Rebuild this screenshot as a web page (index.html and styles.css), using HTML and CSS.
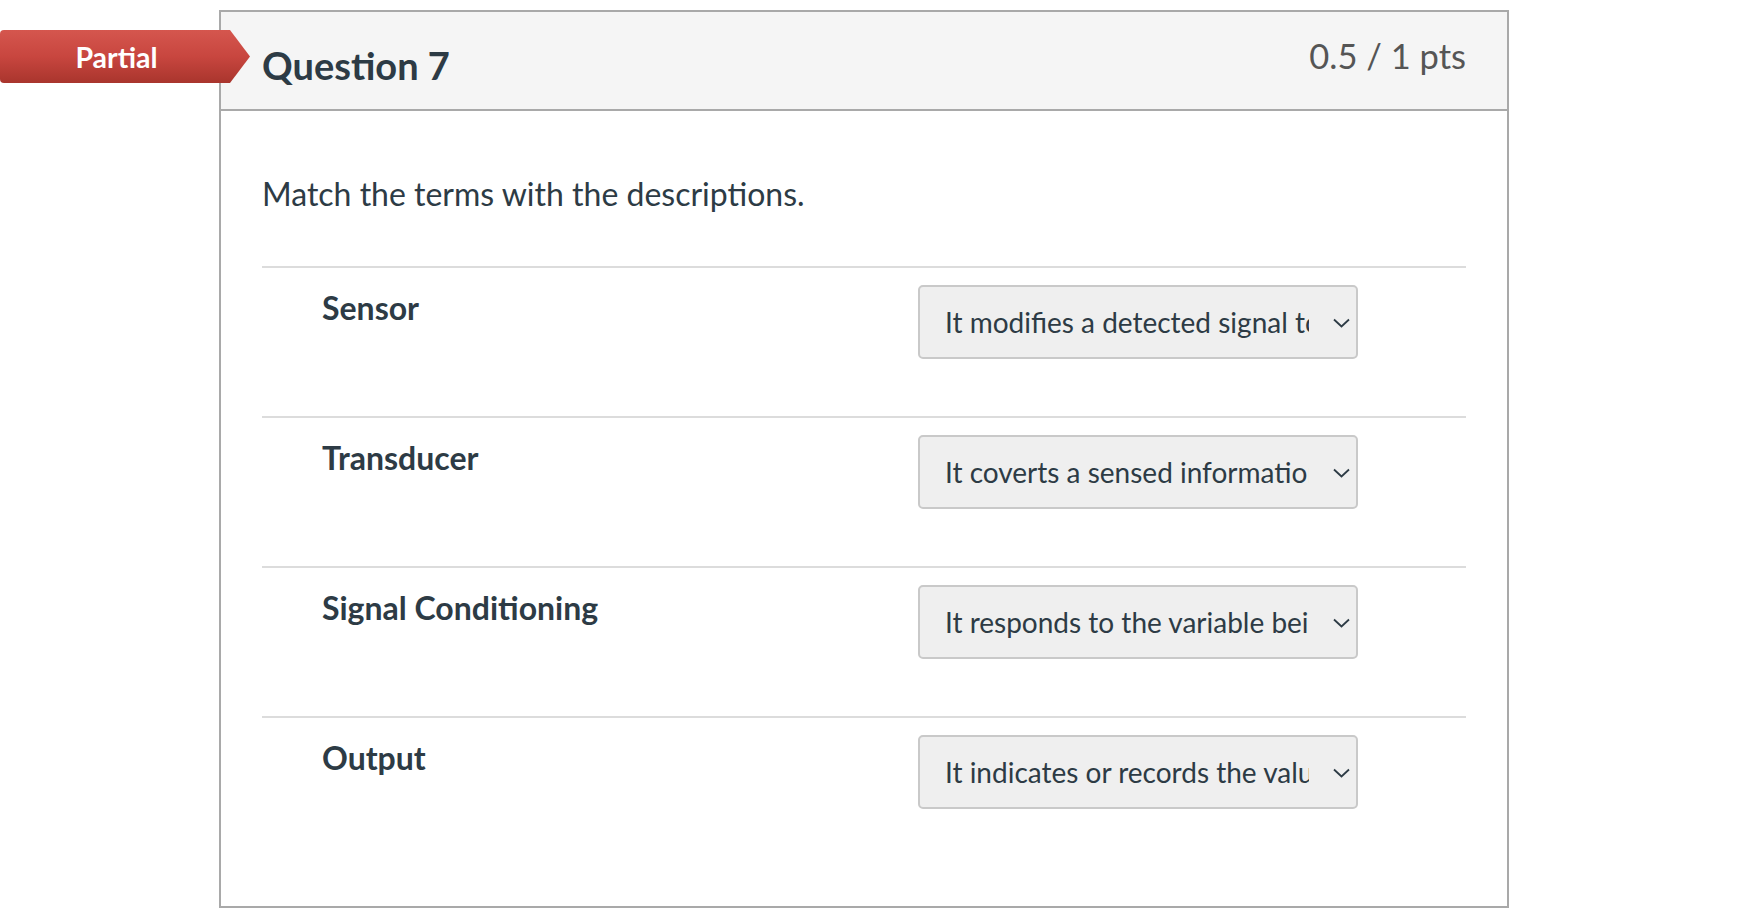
FILE: index.html
```html
<!DOCTYPE html>
<html lang="en">
<head>
<meta charset="utf-8">
<title>Question 7</title>
<link rel="stylesheet" href="styles.css">
</head>
<body>
<div class="page">
  <div class="badge">Partial</div>
  <div class="quiz">
    <div class="header">
      <h2 class="title">Question 7</h2>
      <div class="pts">0.5 / 1 pts</div>
    </div>
    <div class="body">
      <p class="intro">Match the terms with the descriptions.</p>
      <div class="row">
        <div class="term">Sensor</div>
        <div class="select"><span class="val">It modifies a detected signal to a form suitable for processing</span><svg class="chev" width="17" height="10" viewBox="0 0 17 10"><polyline points="1,1.5 8.5,8.5 16,1.5" fill="none" stroke="#2d3b45" stroke-width="1.8"/></svg></div>
      </div>
      <div class="row">
        <div class="term">Transducer</div>
        <div class="select"><span class="val">It coverts a sensed information into a detectable signal</span><svg class="chev" width="17" height="10" viewBox="0 0 17 10"><polyline points="1,1.5 8.5,8.5 16,1.5" fill="none" stroke="#2d3b45" stroke-width="1.8"/></svg></div>
      </div>
      <div class="row">
        <div class="term">Signal Conditioning</div>
        <div class="select"><span class="val">It responds to the variable being measured</span><svg class="chev" width="17" height="10" viewBox="0 0 17 10"><polyline points="1,1.5 8.5,8.5 16,1.5" fill="none" stroke="#2d3b45" stroke-width="1.8"/></svg></div>
      </div>
      <div class="row">
        <div class="term">Output</div>
        <div class="select"><span class="val">It indicates or records the value of the measurement</span><svg class="chev" width="17" height="10" viewBox="0 0 17 10"><polyline points="1,1.5 8.5,8.5 16,1.5" fill="none" stroke="#2d3b45" stroke-width="1.8"/></svg></div>
      </div>
    </div>
  </div>
</div>
</body>
</html>
```
FILE: styles.css
```css
html, body {
  margin: 0;
  padding: 0;
  background: #ffffff;
}
body {
  font-family: Lato, "Open Sans", "Liberation Sans", sans-serif;
  color: #2d3b45;
}
.page {
  position: relative;
  padding-top: 10px;
}
.badge {
  position: absolute;
  left: 0;
  top: 30px;
  width: 250px;
  height: 53px;
  box-sizing: border-box;
  padding-right: 17px;
  display: flex;
  align-items: center;
  justify-content: center;
  background: linear-gradient(to bottom, #d5564e 0%, #c8463f 50%, #a9352d 100%);
  clip-path: polygon(0 0, 230px 0, 250px 50%, 230px 100%, 0 100%);
  border-radius: 4px 0 0 4px;
  color: #ffffff;
  font-weight: 700;
  font-size: 28.5px;
  z-index: 2;
}
.quiz {
  margin-left: 219px;
  width: 1290px;
  height: 898px;
  box-sizing: border-box;
  border: 2px solid #a9a9a9;
  background: #ffffff;
}
.header {
  height: 99px;
  box-sizing: border-box;
  background: #f5f5f5;
  border-bottom: 2px solid #a9a9a9;
  padding: 0 41px 0 41px;
  display: flex;
  justify-content: space-between;
  align-items: flex-start;
}
.title {
  margin: 29px 0 0 0;
  font-size: 38px;
  line-height: 48px;
  font-weight: 700;
  color: #2d3b45;
}
.pts {
  margin-top: 22px;
  font-size: 34.5px;
  line-height: 44px;
  color: #555555;
}
.body {
  padding: 59px 41px 0 41px;
}
.intro {
  margin: 0 0 48px 0;
  font-size: 32px;
  line-height: 48px;
}
.row {
  height: 150px;
  box-sizing: border-box;
  border-top: 2px solid #dcdcdc;
  padding-top: 17px;
  display: flex;
  align-items: flex-start;
}
.term {
  width: 596px;
  padding-left: 60px;
  font-size: 32px;
  line-height: 45px;
  font-weight: 700;
}
.select {
  width: 440px;
  height: 74px;
  box-sizing: border-box;
  border: 2px solid #c9c9c9;
  border-radius: 5px;
  background: #efefef;
  padding: 0 47px 0 25px;
  display: flex;
  align-items: center;
  position: relative;
}
.val {
  display: block;
  overflow: hidden;
  white-space: nowrap;
  font-size: 28px;
  line-height: 40px;
  color: #2d3b45;
}
.chev {
  position: absolute;
  right: 6px;
  top: 31px;
}
```
